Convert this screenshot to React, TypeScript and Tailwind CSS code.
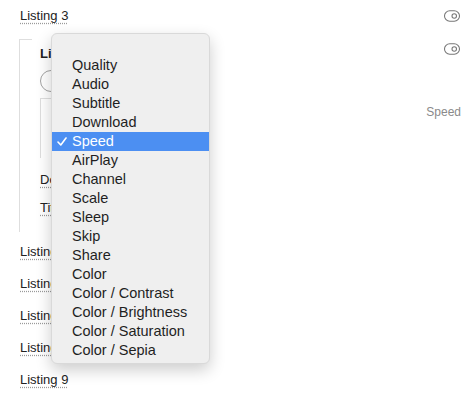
import React from 'react';
import { ToggleRight } from 'lucide-react';

const menuItems = [
    '',
    'Quality',
    'Audio',
    'Subtitle',
    'Download',
    'Speed',
    'AirPlay',
    'Channel',
    'Scale',
    'Sleep',
    'Skip',
    'Share',
    'Color',
    'Color / Contrast',
    'Color / Brightness',
    'Color / Saturation',
    'Color / Sepia',
];

const Dotted: React.FC<{ children: React.ReactNode; className?: string }> = ({ children, className = '' }) => (
    <span className={`leading-4 underline decoration-dotted decoration-[#9a9a9a] underline-offset-[3px] ${className}`}>
        {children}
    </span>
);

const App: React.FC = () => {
    const selected = 'Speed';

    return (
        <div className="relative min-h-[401px] w-[474px] overflow-hidden bg-white font-['Liberation_Sans',Arial,sans-serif] text-[13px] text-[#222]">
            <div className="pl-[19px]">
                {/* Listing 3 */}
                <div className="flex h-8 items-center justify-between pl-px pr-[13px]">
                    <Dotted>Listing 3</Dotted>
                    <ToggleRight size={18} strokeWidth={1.4} className="text-[#777]" />
                </div>

                {/* Expanded listing */}
                <div className="mt-[7px] flex h-[193px] flex-col border-l border-[#dedede]">
                    <div className="h-px w-3 bg-[#dedede]" />
                    <div className="flex items-start justify-between pl-5 pr-[13px]">
                        <span className="mt-[6px] font-bold leading-4">Listing 4</span>
                        <ToggleRight size={18} strokeWidth={1.4} className="text-[#777]" />
                    </div>
                    <div className="ml-5 mt-[8px] h-[22px] w-[64px] rounded-full border border-[#a3a3a3]" />
                    <div className="mt-[6px] flex items-start justify-between pl-5 pr-[13px]">
                        <div className="flex h-[60px] w-[120px] flex-col border-l border-[#dedede]">
                            <div className="h-px w-3 bg-[#dedede]" />
                        </div>
                        <span className="mt-[7px] text-[12px] leading-[14px] text-[#8a8a8a]">Speed</span>
                    </div>
                    <div className="mt-2 flex h-7 items-center pl-5">
                        <Dotted>Download</Dotted>
                    </div>
                    <div className="flex h-7 items-center pl-5">
                        <Dotted>Title</Dotted>
                    </div>
                </div>

                {/* Collapsed listings */}
                <div className="mt-1 flex flex-col pl-px">
                    {['Listing 5', 'Listing 6', 'Listing 7', 'Listing 8', 'Listing 9'].map((name) => (
                        <div key={name} className="flex h-8 items-center">
                            <Dotted>{name}</Dotted>
                        </div>
                    ))}
                </div>
            </div>

            {/* Select dropdown menu */}
            <div className="absolute left-[51px] top-[33px] w-[159px] rounded-[6px] border border-[#d9d9d9] bg-[#efefef] pb-[3px] pt-[3px] shadow-[0_6px_16px_rgba(0,0,0,0.2)]">
                {menuItems.map((item, i) => {
                    const isSel = item === selected;
                    return (
                        <div
                            key={i}
                            className={`relative flex h-[19px] items-center pl-[20px] text-[14.5px] leading-[19px] ${isSel ? 'bg-[#4c8ff2] text-white' : 'text-[#1f1f1f]'}`}
                        >
                            {isSel && (
                                <svg
                                    className="absolute left-[5px] top-[5px]"
                                    width="10"
                                    height="9"
                                    viewBox="0 0 10 9"
                                    fill="none"
                                    stroke="white"
                                    strokeWidth="1.6"
                                    strokeLinecap="round"
                                    strokeLinejoin="round"
                                >
                                    <path d="M1 5 L3.8 8 L9 1" />
                                </svg>
                            )}
                            {item}
                        </div>
                    );
                })}
            </div>
        </div>
    );
};

export default App;
